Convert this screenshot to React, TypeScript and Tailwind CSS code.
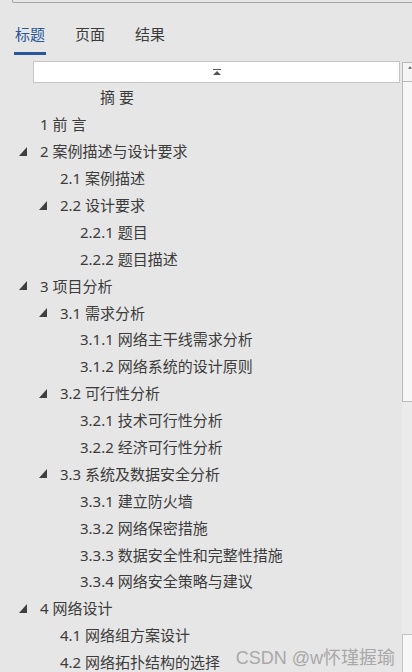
import React from 'react'

interface TocItem {
  text: string
  level: 0 | 1 | 2 | 3
  expandable?: boolean
}

const items: TocItem[] = [
  { text: '摘 要', level: 0 },
  { text: '1 前 言', level: 1 },
  { text: '2 案例描述与设计要求', level: 1, expandable: true },
  { text: '2.1 案例描述', level: 2 },
  { text: '2.2 设计要求', level: 2, expandable: true },
  { text: '2.2.1 题目', level: 3 },
  { text: '2.2.2 题目描述', level: 3 },
  { text: '3 项目分析', level: 1, expandable: true },
  { text: '3.1 需求分析', level: 2, expandable: true },
  { text: '3.1.1 网络主干线需求分析', level: 3 },
  { text: '3.1.2 网络系统的设计原则', level: 3 },
  { text: '3.2 可行性分析', level: 2, expandable: true },
  { text: '3.2.1 技术可行性分析', level: 3 },
  { text: '3.2.2 经济可行性分析', level: 3 },
  { text: '3.3 系统及数据安全分析', level: 2, expandable: true },
  { text: '3.3.1 建立防火墙', level: 3 },
  { text: '3.3.2 网络保密措施', level: 3 },
  { text: '3.3.3 数据安全性和完整性措施', level: 3 },
  { text: '3.3.4 网络安全策略与建议', level: 3 },
  { text: '4 网络设计', level: 1, expandable: true },
  { text: '4.1 网络组方案设计', level: 2 },
  { text: '4.2 网络拓扑结构的选择', level: 2 },
]

// left offset of the triangle slot per level
const indent = {
  0: 'pl-[79px]',
  1: 'pl-[19px]',
  2: 'pl-[39px]',
  3: 'pl-[59px]',
}

function Expander() {
  return (
    <svg width="8" height="9" viewBox="0 0 8 9" className="shrink-0">
      <polygon points="8,0 8,9 0,9" fill="#404040" />
    </svg>
  )
}

function TocRow({ item }: { item: TocItem }) {
  return (
    <div className={`flex h-[26.9px] items-center ${indent[item.level]}`}>
      {item.expandable ? <Expander /> : <span className="w-[8px] shrink-0" />}
      <span className="ml-[13px] whitespace-nowrap text-[15px] leading-[20px] text-[#3c3c3c]">
        {item.text}
      </span>
    </div>
  )
}

function Tabs() {
  const tabs = ['标题', '页面', '结果']
  return (
    <div className="mt-[21px] flex gap-[30px] pl-[15px]">
      {tabs.map((t, i) => (
        <div key={t} className="flex flex-col">
          <span className={`text-[15px] leading-[20px] ${i === 0 ? 'text-[#2b579a]' : 'text-[#3c3c3c]'}`}>
            {t}
          </span>
          <span className={`-mx-[1px] mt-[8px] h-[3px] ${i === 0 ? 'bg-[#2b579a]' : 'bg-transparent'}`} />
        </div>
      ))}
    </div>
  )
}

function ScrollBar() {
  return (
    <div className="mt-[1px] flex w-[10px] shrink-0 flex-col">
      <div className="flex h-[20px] border-y border-l border-[#b9b9b9] bg-[#f4f4f4] pl-[5px] pt-[2px]">
        <svg width="8" height="5" viewBox="0 0 8 5">
          <polygon points="4,0 8,5 0,5" fill="#606060" />
        </svg>
      </div>
      <div className="h-[320px] border-b border-l border-[#b9b9b9] bg-[#f7f7f7]" />
      <div className="h-[232px] bg-[#ebebeb]" />
      <div className="flex-1 border-l border-t border-[#c4c4c4] bg-[#f7f7f7]" />
    </div>
  )
}

export default function App() {
  return (
    <div
      className="relative h-[672px] w-[412px] overflow-hidden bg-[#e6e6e6]"
      style={{ fontFamily: '"Noto Sans", "Noto Sans CJK SC", sans-serif' }}
    >
      {/* search box edge above the tabs */}
      <div className="ml-[12px] h-[3px] rounded-bl-[2px] border-b border-l border-[#a4a4a4]" />

      <Tabs />

      <div className="mt-[6px] flex">
        <div className="flex-1">
          <div className="ml-[33px] flex h-[22px] w-[367px] flex-col items-center justify-center border border-[#c6c6c6] bg-white">
            <span className="h-[1.5px] w-[8px] bg-[#555555]" />
            <svg width="8" height="4" viewBox="0 0 8 4" className="mt-[1px]">
              <polygon points="4,0 8,4 0,4" fill="#555555" />
            </svg>
          </div>
          <div className="mt-[1px]">
            {items.map((it) => (
              <TocRow key={it.text} item={it} />
            ))}
          </div>
        </div>
        <ScrollBar />
      </div>

      {/* watermark */}
      <div
        className="absolute bottom-[4px] right-[17px] whitespace-nowrap text-[18px] leading-[20px] text-[#a9a9a9]"
        style={{ fontFamily: '"Liberation Sans", "Noto Sans CJK SC", sans-serif' }}
      >
        CSDN @w怀瑾握瑜
      </div>
    </div>
  )
}
